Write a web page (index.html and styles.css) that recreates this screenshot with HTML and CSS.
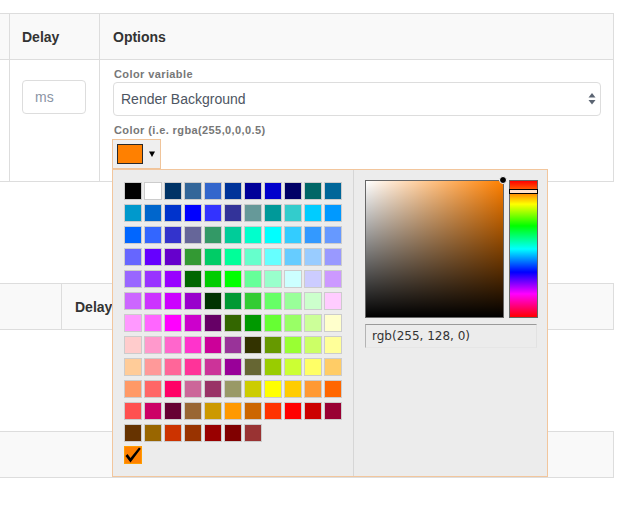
FILE: index.html
```html
<!DOCTYPE html>
<html>
<head>
<meta charset="utf-8">
<link rel="stylesheet" href="styles.css">
</head>
<body>
<div class="page">
  <div class="tables">
    <div class="tbl t1">
      <div class="row head">
        <div class="cell c0"></div>
        <div class="cell c1">Delay</div>
        <div class="cell c2">Options</div>
      </div>
      <div class="row body">
        <div class="cell c0"></div>
        <div class="cell c1 delay"><input class="ms" type="text" placeholder="ms"></div>
        <div class="cell c2 options">
          <label class="lbl">Color variable</label>
          <div class="select">
            <span>Render Background</span>
            <svg class="arrows" width="8" height="14" viewBox="0 0 8 14"><polygon points="4,1 7.5,5.5 0.5,5.5" fill="#5b6472"/><polygon points="0.5,8 7.5,8 4,12.5" fill="#5b6472"/></svg>
          </div>
          <label class="lbl lbl2">Color (i.e. rgba(255,0,0,0.5)</label>
          <div class="color-field">
            <div class="color-btn">
              <span class="cur"></span>
              <svg class="caret" width="6" height="6" viewBox="0 0 6 6"><polygon points="0,0.5 6,0.5 3,6" fill="#000"/></svg>
            </div>
            <div class="popup">
              <div class="palette">
                <div class="sw" style="background:#000000"></div><div class="sw" style="background:#ffffff"></div><div class="sw" style="background:#003366"></div><div class="sw" style="background:#336699"></div><div class="sw" style="background:#3366cc"></div><div class="sw" style="background:#003399"></div><div class="sw" style="background:#000099"></div><div class="sw" style="background:#0000cc"></div><div class="sw" style="background:#000066"></div><div class="sw" style="background:#006666"></div><div class="sw" style="background:#006699"></div>
                <div class="sw" style="background:#0099cc"></div><div class="sw" style="background:#0066cc"></div><div class="sw" style="background:#0033cc"></div><div class="sw" style="background:#0000ff"></div><div class="sw" style="background:#3333ff"></div><div class="sw" style="background:#333399"></div><div class="sw" style="background:#669999"></div><div class="sw" style="background:#009999"></div><div class="sw" style="background:#33cccc"></div><div class="sw" style="background:#00ccff"></div><div class="sw" style="background:#0099ff"></div>
                <div class="sw" style="background:#0066ff"></div><div class="sw" style="background:#3366ff"></div><div class="sw" style="background:#3333cc"></div><div class="sw" style="background:#666699"></div><div class="sw" style="background:#339966"></div><div class="sw" style="background:#00cc99"></div><div class="sw" style="background:#00ffcc"></div><div class="sw" style="background:#00ffff"></div><div class="sw" style="background:#33ccff"></div><div class="sw" style="background:#3399ff"></div><div class="sw" style="background:#6699ff"></div>
                <div class="sw" style="background:#6666ff"></div><div class="sw" style="background:#6600ff"></div><div class="sw" style="background:#6600cc"></div><div class="sw" style="background:#339933"></div><div class="sw" style="background:#00cc66"></div><div class="sw" style="background:#00ff99"></div><div class="sw" style="background:#66ffcc"></div><div class="sw" style="background:#66ffff"></div><div class="sw" style="background:#66ccff"></div><div class="sw" style="background:#99ccff"></div><div class="sw" style="background:#9999ff"></div>
                <div class="sw" style="background:#9966ff"></div><div class="sw" style="background:#9933ff"></div><div class="sw" style="background:#9900ff"></div><div class="sw" style="background:#006600"></div><div class="sw" style="background:#00cc00"></div><div class="sw" style="background:#00ff00"></div><div class="sw" style="background:#66ff99"></div><div class="sw" style="background:#99ffcc"></div><div class="sw" style="background:#ccffff"></div><div class="sw" style="background:#ccccff"></div><div class="sw" style="background:#cc99ff"></div>
                <div class="sw" style="background:#cc66ff"></div><div class="sw" style="background:#cc33ff"></div><div class="sw" style="background:#cc00ff"></div><div class="sw" style="background:#9900cc"></div><div class="sw" style="background:#003300"></div><div class="sw" style="background:#009933"></div><div class="sw" style="background:#33cc33"></div><div class="sw" style="background:#66ff66"></div><div class="sw" style="background:#99ff99"></div><div class="sw" style="background:#ccffcc"></div><div class="sw" style="background:#ffccff"></div>
                <div class="sw" style="background:#ff99ff"></div><div class="sw" style="background:#ff66ff"></div><div class="sw" style="background:#ff00ff"></div><div class="sw" style="background:#cc00cc"></div><div class="sw" style="background:#660066"></div><div class="sw" style="background:#336600"></div><div class="sw" style="background:#009900"></div><div class="sw" style="background:#66ff33"></div><div class="sw" style="background:#99ff66"></div><div class="sw" style="background:#ccff99"></div><div class="sw" style="background:#ffffcc"></div>
                <div class="sw" style="background:#ffcccc"></div><div class="sw" style="background:#ff99cc"></div><div class="sw" style="background:#ff66cc"></div><div class="sw" style="background:#ff33cc"></div><div class="sw" style="background:#cc0099"></div><div class="sw" style="background:#993399"></div><div class="sw" style="background:#333300"></div><div class="sw" style="background:#669900"></div><div class="sw" style="background:#99ff33"></div><div class="sw" style="background:#ccff66"></div><div class="sw" style="background:#ffff99"></div>
                <div class="sw" style="background:#ffcc99"></div><div class="sw" style="background:#ff9999"></div><div class="sw" style="background:#ff6699"></div><div class="sw" style="background:#ff3399"></div><div class="sw" style="background:#cc3399"></div><div class="sw" style="background:#990099"></div><div class="sw" style="background:#666633"></div><div class="sw" style="background:#99cc00"></div><div class="sw" style="background:#ccff33"></div><div class="sw" style="background:#ffff66"></div><div class="sw" style="background:#ffcc66"></div>
                <div class="sw" style="background:#ff9966"></div><div class="sw" style="background:#ff6666"></div><div class="sw" style="background:#ff0066"></div><div class="sw" style="background:#cc6699"></div><div class="sw" style="background:#993366"></div><div class="sw" style="background:#999966"></div><div class="sw" style="background:#cccc00"></div><div class="sw" style="background:#ffff00"></div><div class="sw" style="background:#ffcc00"></div><div class="sw" style="background:#ff9933"></div><div class="sw" style="background:#ff6600"></div>
                <div class="sw" style="background:#ff5050"></div><div class="sw" style="background:#cc0066"></div><div class="sw" style="background:#660033"></div><div class="sw" style="background:#996633"></div><div class="sw" style="background:#cc9900"></div><div class="sw" style="background:#ff9900"></div><div class="sw" style="background:#cc6600"></div><div class="sw" style="background:#ff3300"></div><div class="sw" style="background:#ff0000"></div><div class="sw" style="background:#cc0000"></div><div class="sw" style="background:#990033"></div>
                <div class="sw" style="background:#663300"></div><div class="sw" style="background:#996600"></div><div class="sw" style="background:#cc3300"></div><div class="sw" style="background:#993300"></div><div class="sw" style="background:#990000"></div><div class="sw" style="background:#800000"></div><div class="sw" style="background:#993333"></div><div class="sw empty"></div><div class="sw empty"></div><div class="sw empty"></div><div class="sw empty"></div>
                <div class="sw checked">
                  <svg class="check" width="18" height="18" viewBox="0 0 18 18"><polygon points="1.5,10 3.5,8 6.5,12 15,1.5 16.8,2.8 6.5,16.5" fill="#000"/></svg>
                </div>
              </div>
              <div class="picker">
                <div class="picker-top">
                  <div class="sv"><span class="sv-dot"></span></div>
                  <div class="hue"><span class="hue-mark"></span></div>
                </div>
                <div class="rgb-input">rgb(255, 128, 0)</div>
              </div>
            </div>
          </div>
        </div>
      </div>
    </div>

    <div class="tbl t2">
      <div class="row head">
        <div class="cell c0 wide"></div>
        <div class="cell c1 delay2">Delay</div>
        <div class="cell c2">Options</div>
      </div>
    </div>

    <div class="tbl t3">
      <div class="row head">
        <div class="cell c2"></div>
      </div>
    </div>
  </div>
</div>
</body>
</html>
```

FILE: styles.css
```css
* { box-sizing: border-box; }

body {
  margin: 0;
  background: #ffffff;
  font-family: "Liberation Sans", Arial, sans-serif;
  color: #333333;
}

.page {
  width: 623px;
  height: 509px;
  padding-top: 13px;
  overflow: hidden;
}

.tables {
  margin-left: -31px;
  width: 645px;
}

.tbl {
  border-top: 1px solid #dddddd;
  border-right: 1px solid #dddddd;
}

.t2, .t3 { margin-top: 101px; }

.row {
  display: flex;
  border-bottom: 1px solid #dddddd;
}

.head {
  height: 46px;
  background: #f9f9f9;
}

.body { height: 122px; }

.cell { flex: none; }

.head .cell {
  display: flex;
  align-items: center;
  padding: 0 12px;
  font-size: 14px;
  font-weight: bold;
  color: #333333;
}

.c0 { width: 41px; border-right: 1px solid #dddddd; }
.c0.wide { width: 93px; }
.c1 { width: 90px; border-right: 1px solid #dddddd; }
.c2 { flex: 1 1 auto; }
.head .c2 { padding-left: 13px; }
.head .delay2 { padding-left: 13px; }

.delay { padding: 20px 12px; }

.ms {
  display: block;
  width: 64px;
  height: 34px;
  margin: 0;
  border: 1px solid #dddddd;
  border-radius: 4px;
  padding: 0 12px;
  font-family: "Liberation Sans", Arial, sans-serif;
  font-size: 14px;
  color: #555555;
  background: #ffffff;
  outline: none;
}
.ms::placeholder { color: #8a94a4; }

.options {
  padding: 6px 12px 0 12px;
  position: relative;
}

.lbl {
  display: block;
  font-size: 11px;
  line-height: 16px;
  font-weight: bold;
  color: #777777;
  letter-spacing: 0.4px;
  padding-left: 2px;
}

.lbl2 { margin: 6px 0 1px; }

.select {
  display: flex;
  align-items: center;
  height: 34px;
  margin-left: 1px;
  border: 1px solid #dddddd;
  border-radius: 4px;
  padding: 0 4px 0 7px;
  font-size: 14px;
  color: #4d5562;
  background: #ffffff;
}
.select .arrows { margin-left: auto; }

.color-field {
  position: relative;
  width: 49px;
}

.color-btn {
  display: flex;
  align-items: center;
  height: 30px;
  width: 49px;
  padding: 3px 5px 3px 4px;
  border: 1px solid #f0c49a;
  background: #efefef;
}

.cur {
  width: 26px;
  height: 20px;
  border: 1px solid #2a2a2a;
  background: #ff8000;
}

.caret { margin-left: 6px; }

.popup {
  position: absolute;
  z-index: 10;
  top: 100%;
  left: 0;
  width: 436px;
  height: 308px;
  display: flex;
  background: #ececec;
  border: 1px solid #f2c69d;
}

.palette {
  width: 241px;
  padding: 12px 0 0 11px;
  border-right: 1px solid #d6d6d6;
  display: grid;
  grid-template-columns: repeat(11, 18px);
  grid-auto-rows: 18px;
  column-gap: 2px;
  row-gap: 4px;
  align-content: start;
}

.sw {
  width: 18px;
  height: 18px;
  border: 1px solid #cccccc;
}
.sw.empty { border: none; }

.sw.checked {
  position: relative;
  background: #ff8000;
  border-color: #ff9d00;
}
.check {
  position: absolute;
  left: -1px;
  top: -1px;
}

.picker {
  padding: 10px 0 0 11px;
}

.picker-top {
  display: flex;
  gap: 5px;
}

.sv {
  position: relative;
  width: 139px;
  height: 138px;
  border: 1px solid #666666;
  background:
    linear-gradient(to top, #000000, rgba(0,0,0,0)),
    linear-gradient(to right, #ffffff, rgba(255,255,255,0)),
    #ff8000;
}

.sv-dot {
  position: absolute;
  right: -4px;
  top: -5px;
  width: 8px;
  height: 8px;
  border-radius: 50%;
  background: #000000;
  border: 1px solid #ffffff;
}

.hue {
  position: relative;
  width: 29px;
  height: 138px;
  border: 1px solid #666666;
  background: linear-gradient(to bottom, #ff0000 0%, #ffff00 17%, #00ff00 33%, #00ffff 50%, #0000ff 67%, #ff00ff 83%, #ff0000 100%);
}

.hue-mark {
  position: absolute;
  left: -1px;
  right: -1px;
  top: 8px;
  height: 5px;
  border: 1px solid #000000;
  background: #ffe2c8;
}

.rgb-input {
  margin-top: 6px;
  width: 172px;
  height: 24px;
  padding-left: 6px;
  display: flex;
  align-items: center;
  font-family: "DejaVu Sans", sans-serif;
  font-size: 12px;
  color: #333333;
  border-top: 1px solid #9a9a9a;
  border-left: 1px solid #b4b4b4;
  border-right: 1px solid #e2e2e2;
  border-bottom: 1px solid #e6e6e6;
}
```
